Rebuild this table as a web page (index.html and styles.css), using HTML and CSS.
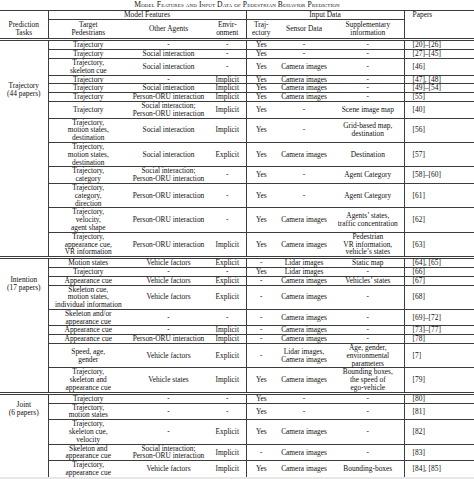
FILE: index.html
```html
<!DOCTYPE html>
<html>
<head>
<meta charset="utf-8">
<link rel="stylesheet" href="styles.css">
</head>
<body>
<div class="page">
<div class="title">Model Features and Input Data of Pedestrian Behavior Prediction</div>
<table class="tbl">
<colgroup>
<col class="w1">
<col class="w2 vl">
<col class="w3">
<col class="w4">
<col class="w5 vl">
<col class="w6">
<col class="w7">
<col class="w8 vl">
</colgroup>
<thead>
<tr class="h1">
<th rowspan="2" class="ptask">Prediction<br>Tasks</th>
<th colspan="3">Model Features</th>
<th colspan="3">Input Data</th>
<th rowspan="2" class="pap">Papers</th>
</tr>
<tr class="h2">
<th>Target<br>Pedestrians</th>
<th>Other Agents</th>
<th>Envir-<br>onment</th>
<th>Traj-<br>ectory</th>
<th>Sensor Data</th>
<th>Supplementary<br>information</th>
</tr>
</thead>
<tbody>
<tr class="sec">
<td rowspan="13" class="task t1">Trajectory<br>(44 papers)</td>
<td>Trajectory</td><td>-</td><td>-</td><td>Yes</td><td>-</td><td>-</td><td class="pap">[20]–[26]</td>
</tr>
<tr><td>Trajectory</td><td>Social interaction</td><td>-</td><td>Yes</td><td>-</td><td>-</td><td class="pap">[27]–[45]</td></tr>
<tr><td>Trajectory,<br>skeleton cue</td><td>Social interaction</td><td>-</td><td>Yes</td><td>Camera images</td><td>-</td><td class="pap">[46]</td></tr>
<tr><td>Trajectory</td><td>-</td><td>Implicit</td><td>Yes</td><td>Camera images</td><td>-</td><td class="pap">[47], [48]</td></tr>
<tr><td>Trajectory</td><td>Social interaction</td><td>Implicit</td><td>Yes</td><td>Camera images</td><td>-</td><td class="pap">[49]–[54]</td></tr>
<tr><td>Trajectory</td><td>Person-ORU interaction</td><td>Implicit</td><td>Yes</td><td>Camera images</td><td>-</td><td class="pap">[55]</td></tr>
<tr><td>Trajectory</td><td>Social interaction;<br>Person-ORU interaction</td><td>Implicit</td><td>Yes</td><td>-</td><td>Scene image map</td><td class="pap">[40]</td></tr>
<tr><td>Trajectory,<br>motion states,<br>destination</td><td>Social interaction</td><td>Implicit</td><td>Yes</td><td>-</td><td>Grid-based map,<br>destination</td><td class="pap">[56]</td></tr>
<tr><td>Trajectory,<br>motion states,<br>destination</td><td>Social interaction</td><td>Explicit</td><td>Yes</td><td>Camera images</td><td>Destination</td><td class="pap">[57]</td></tr>
<tr><td>Trajectory,<br>category</td><td>Social interaction;<br>Person-ORU interaction</td><td>-</td><td>Yes</td><td>-</td><td>Agent Category</td><td class="pap">[58]–[60]</td></tr>
<tr><td>Trajectory,<br>category,<br>direction</td><td>Person-ORU interaction</td><td>-</td><td>Yes</td><td>-</td><td>Agent Category</td><td class="pap">[61]</td></tr>
<tr><td>Trajectory,<br>velocity,<br>agent shape</td><td>Person-ORU interaction</td><td>-</td><td>Yes</td><td>Camera images</td><td>Agents’ states,<br>traffic concentration</td><td class="pap">[62]</td></tr>
<tr><td>Trajectory,<br>appearance cue,<br>VR information</td><td>Person-ORU interaction</td><td>Implicit</td><td>Yes</td><td>Camera images</td><td>Pedestrian<br>VR information,<br>vehicle’s states</td><td class="pap">[63]</td></tr>

<tr class="sec">
<td rowspan="9" class="task t2">Intention<br>(17 papers)</td>
<td>Motion states</td><td>Vehicle factors</td><td>Explicit</td><td>-</td><td>Lidar images</td><td>Static map</td><td class="pap">[64], [65]</td>
</tr>
<tr><td>Trajectory</td><td>-</td><td>-</td><td>Yes</td><td>Lidar images</td><td>-</td><td class="pap">[66]</td></tr>
<tr><td>Appearance cue</td><td>Vehicle factors</td><td>Explicit</td><td>-</td><td>Camera images</td><td>Vehicles’ states</td><td class="pap">[67]</td></tr>
<tr><td>Skeleton cue,<br>motion states,<br>individual information</td><td>Vehicle factors</td><td>Explicit</td><td>-</td><td>Camera images</td><td>-</td><td class="pap">[68]</td></tr>
<tr><td>Skeleton and/or<br>appearance cue</td><td>-</td><td>-</td><td>-</td><td>Camera images</td><td>-</td><td class="pap">[69]–[72]</td></tr>
<tr><td>Appearance cue</td><td>-</td><td>Implicit</td><td>-</td><td>Camera images</td><td>-</td><td class="pap">[73]–[77]</td></tr>
<tr><td>Appearance cue</td><td>Person-ORU interaction</td><td>Implicit</td><td>-</td><td>Camera images</td><td>-</td><td class="pap">[78]</td></tr>
<tr><td>Speed, age,<br>gender</td><td>Vehicle factors</td><td>Explicit</td><td>-</td><td>Lidar images,<br>Camera images</td><td>Age, gender,<br>environmental<br>parameters</td><td class="pap">[7]</td></tr>
<tr><td>Trajectory,<br>skeleton and<br>appearance cue</td><td>Vehicle states</td><td>Implicit</td><td>Yes</td><td>Camera images</td><td>Bounding boxes,<br>the speed of<br>ego-vehicle</td><td class="pap">[79]</td></tr>

<tr class="sec">
<td rowspan="5" class="task t3">Joint<br>(6 papers)</td>
<td>Trajectory</td><td>-</td><td>-</td><td>Yes</td><td>-</td><td>-</td><td class="pap">[80]</td>
</tr>
<tr><td>Trajectory,<br>motion states</td><td>-</td><td>-</td><td>Yes</td><td>-</td><td>-</td><td class="pap">[81]</td></tr>
<tr><td>Trajectory,<br>skeleton cue,<br>velocity</td><td>-</td><td>Explicit</td><td>Yes</td><td>Camera images</td><td>-</td><td class="pap">[82]</td></tr>
<tr><td>Skeleton and<br>appearance cue</td><td>Social interaction;<br>Person-ORU interaction</td><td>Implicit</td><td>-</td><td>Camera images</td><td>-</td><td class="pap">[83]</td></tr>
<tr><td>Trajectory,<br>appearance cue</td><td>Vehicle factors</td><td>Implicit</td><td>Yes</td><td>Camera images</td><td>Bounding-boxes</td><td class="pap">[84], [85]</td></tr>
</tbody>
</table>
</div>
</body>
</html>
```
FILE: styles.css
```css
html, body {
  margin: 0;
  padding: 0;
  background: #e7e7e7;
}
body {
  font-family: "Liberation Serif", "Times New Roman", serif;
  color: #111111;
}
.page {
  width: 474px;
  height: 477px;
  background: #ffffff;
  overflow: hidden;
}
.title {
  font-variant: small-caps;
  font-size: 7.6px;
  line-height: 9px;
  height: 9px;
  text-align: center;
  margin-bottom: 1px;
  letter-spacing: 0.1px;
}
.tbl {
  width: 474px;
  table-layout: fixed;
  border-collapse: collapse;
  font-size: 7.4px;
  line-height: 7.8px;
}
.w1 { width: 48px; }
.w2 { width: 80px; }
.w3 { width: 81px; }
.w4 { width: 37px; }
.w5 { width: 30px; }
.w6 { width: 56px; }
.w7 { width: 72px; }
.w8 { width: 70px; }
col.vl { border-left: 1px solid #3c3c3c; }
th, td {
  padding: 0;
  text-align: center;
  vertical-align: middle;
  font-weight: normal;
  white-space: nowrap;
}
tr { border-top: 1px solid #3c3c3c; }
.h2 th { padding: 1px 0 2px 0; }
th.ptask { vertical-align: bottom; padding-bottom: 2px; }
th.pap { vertical-align: top; }
.pap { text-align: left; padding-left: 8px; }
tbody tr.sec { border-top: 3px double #3c3c3c; }
tbody tr:last-child { border-bottom: 1px solid #3c3c3c; }
td.task { vertical-align: top; }
td.t1 { padding-top: 41px; }
td.t2 { padding-top: 17px; }
td.t3 { padding-top: 6px; }
```
